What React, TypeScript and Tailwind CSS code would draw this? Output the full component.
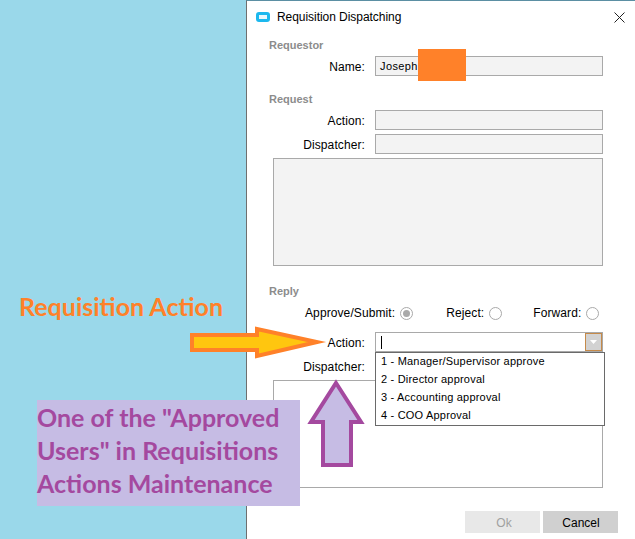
import React from "react";

const font = { fontFamily: '"Liberation Sans", Arial, sans-serif' };

function Field({ label, children }: { label: string; children?: React.ReactNode }) {
  return (
    <div className="flex h-5 items-center pl-[26px]">
      <div className="w-[93px] pt-[1px] pr-[1px] text-right text-[12px] tracking-[0.1px] text-black">{label}</div>
      <div className="ml-[9px] flex h-5 w-[228px] items-center border border-[#a9a9a9] bg-[#f3f3f3] pl-1 text-[11px] tracking-[0.4px] text-black">
        {children}
      </div>
    </div>
  );
}

function Heading({ children, className }: { children: React.ReactNode; className: string }) {
  return <div className={`pl-[22px] text-[11px] leading-[14px] font-bold text-[#8c8c8c] ${className}`}>{children}</div>;
}

function Radio({ label, checked, className }: { label: string; checked?: boolean; className: string }) {
  return (
    <div className={`flex items-center text-[12px] tracking-[0.1px] text-black ${className}`}>
      <span>{label}</span>
      <span className="ml-[5px] flex h-[13px] w-[13px] items-center justify-center rounded-full border border-[#a9a9a9] bg-white">
        {checked && <span className="h-[7px] w-[7px] rounded-full bg-[#a9a9a9]" />}
      </span>
    </div>
  );
}

export default function App() {
  return (
    <div className="relative flex h-[539px] w-[635px] overflow-hidden bg-[#9ad8ea]" style={font}>
      <div className="ml-[246px] flex h-[539px] w-[389px] flex-col border-t border-l border-t-[#5b8fa3] border-l-[#6f6f6f] bg-white">
        {/* Title bar */}
        <div className="flex h-[32px] items-center pr-[10px] pl-[9px]">
          <span className="h-[10px] w-[14px] rounded-[3px] border-[3px] border-[#1cb8ee] bg-[#e8f7fd]" />
          <span className="ml-[7px] text-[12px] tracking-[-0.05px] text-black">Requisition Dispatching</span>
          <svg className="ml-auto" width="11" height="11" viewBox="0 0 11 11" fill="none" stroke="#222" strokeWidth="1">
            <path d="M0.5 0.5 L10.5 10.5 M10.5 0.5 L0.5 10.5" />
          </svg>
        </div>

        <Heading className="mt-[5px]">Requestor</Heading>
        <div className="mt-[4px]">
          <Field label="Name:">Joseph</Field>
        </div>

        <Heading className="mt-[16px]">Request</Heading>
        <div className="mt-[4px] flex flex-col gap-1">
          <Field label="Action:" />
          <Field label="Dispatcher:" />
        </div>
        <div className="mt-1 ml-[26px] h-[108px] w-[330px] border border-[#a9a9a9] bg-[#f3f3f3]" />

        <Heading className="mt-[18px]">Reply</Heading>
        <div className="mt-[7px] flex h-4 items-center">
          <Radio label="Approve/Submit:" checked className="ml-[58px]" />
          <Radio label="Reject:" className="ml-[33px]" />
          <Radio label="Forward:" className="ml-[31px]" />
        </div>
        <div className="mt-[11px] flex h-5 items-center pl-[26px]">
          <div className="w-[93px] pt-[1px] pr-[1px] text-right text-[12px] tracking-[0.1px] text-black">Action:</div>
          <div className="ml-[9px] flex h-5 w-[228px] items-center justify-between border border-[#a9a9a9] bg-white pl-[5px]">
            <span className="h-[13px] w-px bg-black" />
            <span className="flex h-[18px] w-[17px] items-center justify-center border border-[#c58a4a] bg-[#d2d2d2]">
              <svg width="7" height="4" viewBox="0 0 7 4"><path d="M0 0 H7 L3.5 4 Z" fill="#fff" /></svg>
            </span>
          </div>
        </div>
        <div className="mt-1 flex h-5 items-center pl-[26px]">
          <div className="w-[93px] pt-[1px] pr-[1px] text-right text-[12px] tracking-[0.1px] text-black">Dispatcher:</div>
          <div className="ml-[9px] h-5 w-[228px] border border-[#a9a9a9]" />
        </div>
        <div className="mt-1 ml-[26px] h-[108px] w-[330px] border border-[#a9a9a9] bg-white" />

        <div className="mt-[23px] flex justify-end gap-[3px] pr-[17px]">
          <div className="flex h-[22px] w-[75px] items-center justify-center bg-[#e8e8e8] pt-[1px] pl-[3px] text-[12px] text-[#a0a0a0]">Ok</div>
          <div className="flex h-[22px] w-[75px] items-center justify-center bg-[#d0d0d0] pt-[1px] pl-[1px] text-[12px] text-black">Cancel</div>
        </div>
      </div>

      {/* Redaction */}
      <div className="absolute top-[49px] left-[418px] h-[32px] w-[48px] bg-[#ff8129]" />

      {/* Dropdown menu */}
      <div className="absolute top-[352px] left-[375px] h-[74px] w-[230px] border border-[#6a6a6a] bg-white pl-[5px] text-[11px] leading-[18px] tracking-[0.2px] text-black">
        <div className="-mt-px">1 - Manager/Supervisor approve</div>
        <div>2 - Director approval</div>
        <div>3 - Accounting approval</div>
        <div>4 - COO Approval</div>
      </div>

      {/* Annotations */}
      <div className="absolute top-[291px] left-[19px] text-[25px] leading-[30px] font-bold text-[#ff8129]" style={{ fontFamily: "Lato, sans-serif" }}>
        Requisition Action
      </div>
      <svg className="absolute top-[324px] left-[190px]" width="138" height="38" viewBox="0 0 138 38">
        <path d="M2 11 H67 V5 L127 18 L67 32 V26 H2 Z" fill="#ffc60f" stroke="#ff8129" strokeWidth="4" strokeMiterlimit="10" />
      </svg>

      <div className="absolute top-[400px] left-[37px] h-[106px] w-[263px] bg-[#c6bce4] pt-[1px] text-[25px] leading-[33px] font-bold text-[#a4499f]" style={{ fontFamily: "Lato, sans-serif" }}>
        One of the "Approved
        <br />
        Users" in Requisitions
        <br />
        Actions Maintenance
      </div>
      <svg className="absolute top-[377px] left-[306px]" width="62" height="92" viewBox="0 0 62 92">
        <path d="M30 6 L55 45 H45 V88 H17 V45 H5 Z" fill="#c6bce4" stroke="#a4499f" strokeWidth="4" strokeMiterlimit="10" />
      </svg>
    </div>
  );
}
